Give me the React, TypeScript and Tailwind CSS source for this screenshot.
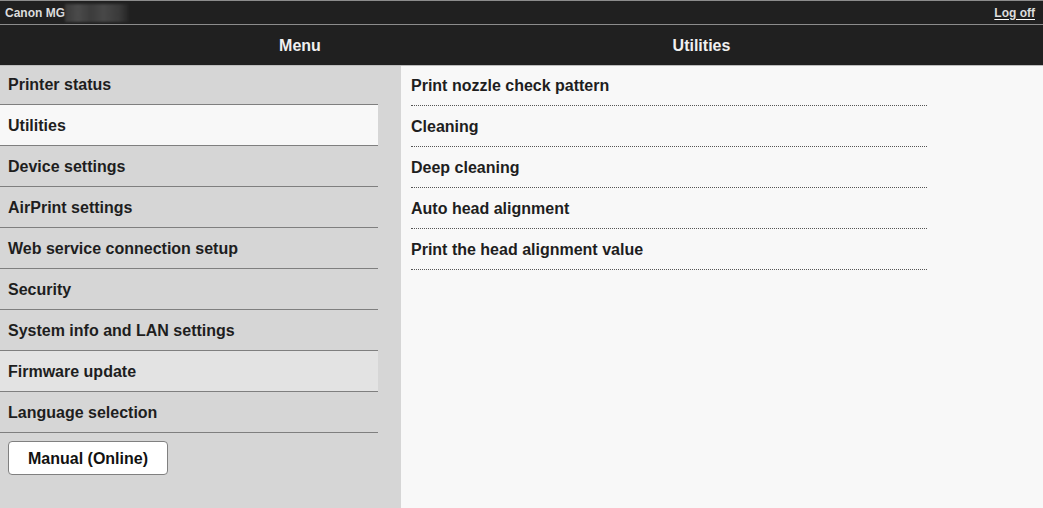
const menu = [
  { label: "Printer status", bg: "" },
  { label: "Utilities", bg: "bg-[#f8f8f8]" },
  { label: "Device settings", bg: "" },
  { label: "AirPrint settings", bg: "" },
  { label: "Web service connection setup", bg: "" },
  { label: "Security", bg: "" },
  { label: "System info and LAN settings", bg: "" },
  { label: "Firmware update", bg: "bg-[#e3e3e3]" },
  { label: "Language selection", bg: "" },
];

const utilities = [
  "Print nozzle check pattern",
  "Cleaning",
  "Deep cleaning",
  "Auto head alignment",
  "Print the head alignment value",
];

export default function App() {
  return (
    <div className="flex h-[508px] w-[1043px] flex-col overflow-hidden bg-[#f8f8f8] font-['Liberation_Sans',Arial,sans-serif] font-bold text-[#1e1e1e]">
      <header className="flex h-[25px] shrink-0 items-center justify-between border-t border-b border-t-[#8c8c8c] border-b-[#8c8c8c] bg-[#202020] pl-[5px] pr-2 text-xs text-[#dcdcdc]">
        <div className="flex items-center">
          <span>Canon MG</span>
          <span className="h-[18px] w-16 bg-[linear-gradient(90deg,#3a3a3a,#4b4b4b_20%,#3c3c3c_40%,#484848_60%,#3a3a3a_85%,#242424)] blur-[1px]" />
        </div>
        <a className="underline decoration-white underline-offset-2">Log off</a>
      </header>
      <div className="flex h-[41px] shrink-0 items-center border-b border-[#bdbdbd] bg-[#202020] pt-px text-base text-[#f0f0f0]">
        <div className="w-[600px] text-center">Menu</div>
        <div className="w-[203px] text-center">Utilities</div>
      </div>
      <div className="flex min-h-0 flex-1">
        <nav className="flex w-[401px] shrink-0 flex-col bg-[#d6d6d6]">
          {menu.map((item) => (
            <div
              key={item.label}
              className={`flex h-[41px] w-[378px] shrink-0 items-center border-b border-[#7f7f7f] pl-2 pt-px text-base first:h-[39px] first:pt-0 ${item.bg}`}
            >
              {item.label}
            </div>
          ))}
          <button className="ml-2 mt-2 h-[34px] w-40 rounded-[4px] border border-[#808080] bg-white pt-px text-base font-bold text-[#111111]">
            Manual (Online)
          </button>
        </nav>
        <main className="flex flex-col pl-[10px]">
          {utilities.map((item) => (
            <div
              key={item}
              className="flex h-[41px] w-[516px] shrink-0 items-center border-b border-dotted border-[#555555] pt-px text-base first:h-[40px] first:pt-0"
            >
              {item}
            </div>
          ))}
        </main>
      </div>
    </div>
  );
}
